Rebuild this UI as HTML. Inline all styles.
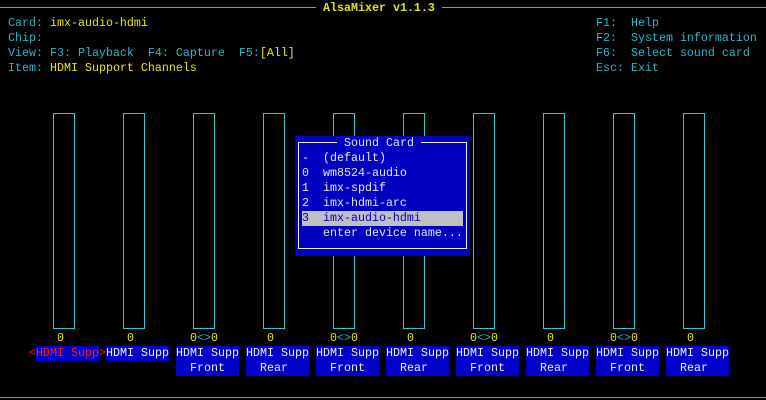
<!DOCTYPE html>
<html><head><meta charset="utf-8"><style>
html,body{margin:0;padding:0;background:#000;}
body{width:766px;height:400px;position:relative;overflow:hidden;font-family:"Liberation Mono",monospace;font-size:11.667px;line-height:15px;}
.t{position:absolute;white-space:pre;height:15px;}
.c{color:#2bb5c8}
.y{color:#e5e510}
.w{color:#e8e8e8}
.r{color:#ff1a1a}
.hl{position:absolute;height:1px;background:#2bc0d0}
.bar{position:absolute;top:113px;width:20px;height:214px;border:1px solid #2bc8d8}
.blk{position:absolute;background:#0000c8;width:63px;color:#f0f0f0}
</style></head><body>
<div class="hl" style="left:0;top:7px;width:316px"></div>
<div class="hl" style="left:442px;top:7px;width:324px"></div>
<div class="t y" style="left:323px;top:1px;font-weight:bold">AlsaMixer v1.1.3</div>
<div class="t" style="left:8px;top:16px"><span class="c">Card: </span><span class="y">imx-audio-hdmi</span></div>
<div class="t c" style="left:8px;top:31px">Chip:</div>
<div class="t" style="left:8px;top:46px"><span class="c">View: F3: Playback  F4: Capture  F5:</span><span class="y">[All]</span></div>
<div class="t" style="left:8px;top:61px"><span class="c">Item: </span><span class="y">HDMI Support Channels</span></div>
<div class="t c" style="left:596px;top:16px">F1:  Help</div>
<div class="t c" style="left:596px;top:31px">F2:  System information</div>
<div class="t c" style="left:596px;top:46px">F6:  Select sound card</div>
<div class="t c" style="left:596px;top:61px">Esc: Exit</div>

<div class="bar" style="left:53px"></div>
<div class="bar" style="left:123px"></div>
<div class="bar" style="left:193px"></div>
<div class="bar" style="left:263px"></div>
<div class="bar" style="left:333px"></div>
<div class="bar" style="left:403px"></div>
<div class="bar" style="left:473px"></div>
<div class="bar" style="left:543px"></div>
<div class="bar" style="left:613px"></div>
<div class="bar" style="left:683px"></div>

<div class="t y" style="left:57px;top:331px">0</div>
<div class="t y" style="left:127px;top:331px">0</div>
<div class="t" style="left:190px;top:331px"><span class="y">0</span><span class="c">&lt;&gt;</span><span class="y">0</span></div>
<div class="t y" style="left:267px;top:331px">0</div>
<div class="t" style="left:330px;top:331px"><span class="y">0</span><span class="c">&lt;&gt;</span><span class="y">0</span></div>
<div class="t y" style="left:407px;top:331px">0</div>
<div class="t" style="left:470px;top:331px"><span class="y">0</span><span class="c">&lt;&gt;</span><span class="y">0</span></div>
<div class="t y" style="left:547px;top:331px">0</div>
<div class="t" style="left:610px;top:331px"><span class="y">0</span><span class="c">&lt;&gt;</span><span class="y">0</span></div>
<div class="t y" style="left:687px;top:331px">0</div>

<div class="t r" style="left:29px;top:346px">&lt;</div>
<div class="t blk r" style="left:36px;top:346px;color:#ff1a1a">HDMI Supp</div>
<div class="t r" style="left:99px;top:346px">&gt;</div>
<div class="t blk" style="left:106px;top:346px">HDMI Supp</div>
<div class="t blk" style="left:176px;top:346px;height:30px">HDMI Supp
  Front</div>
<div class="t blk" style="left:246px;top:346px;height:30px">HDMI Supp
  Rear</div>
<div class="t blk" style="left:316px;top:346px;height:30px">HDMI Supp
  Front</div>
<div class="t blk" style="left:386px;top:346px;height:30px">HDMI Supp
  Rear</div>
<div class="t blk" style="left:456px;top:346px;height:30px">HDMI Supp
  Front</div>
<div class="t blk" style="left:526px;top:346px;height:30px">HDMI Supp
  Rear</div>
<div class="t blk" style="left:596px;top:346px;height:30px">HDMI Supp
  Front</div>
<div class="t blk" style="left:666px;top:346px;height:30px">HDMI Supp
  Rear</div>

<div style="position:absolute;left:295px;top:136px;width:175px;height:120px;background:#0000c0"></div>
<div style="position:absolute;left:298px;top:142px;width:167px;height:105px;border:1px solid #f0f0f0"></div>
<div class="t w" style="left:337px;top:136px;background:#0000c0"> Sound Card </div>
<div style="position:absolute;left:302px;top:211px;width:161px;height:15px;background:#c0c0c0"></div>
<div class="t w" style="left:302px;top:151px">-  (default)</div>
<div class="t w" style="left:302px;top:166px">0  wm8524-audio</div>
<div class="t w" style="left:302px;top:181px">1  imx-spdif</div>
<div class="t w" style="left:302px;top:196px">2  imx-hdmi-arc</div>
<div class="t" style="left:302px;top:211px;color:#0000b0">3  imx-audio-hdmi</div>
<div class="t w" style="left:302px;top:226px">   enter device name...</div>

<div class="hl" style="left:0;top:397px;width:766px"></div>
</body></html>
